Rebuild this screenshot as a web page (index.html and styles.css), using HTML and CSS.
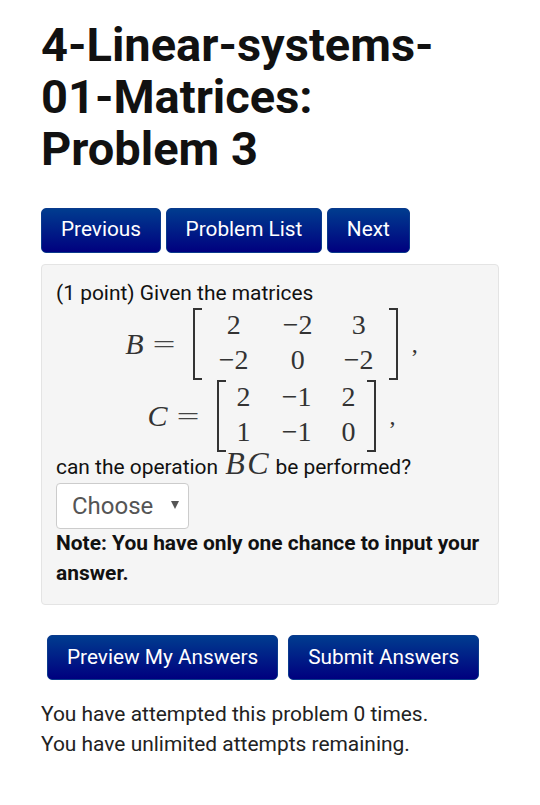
FILE: index.html
```html
<!DOCTYPE html>
<html lang="en">
<head>
    <meta charset="UTF-8">
    <meta name="viewport" content="width=device-width, initial-scale=1.0">
    <title>4-Linear-systems-01-Matrices: Problem 3</title>
    <link rel="stylesheet" href="styles.css">
</head>
<body>
    <h1>4-Linear-systems-<br>01-Matrices:<br>Problem 3</h1>
    <div class="nav-buttons">
        <a href="#" class="btn">Previous</a>
        <a href="#" class="btn">Problem List</a>
        <a href="#" class="btn">Next</a>
    </div>
    <div class="well">
        <div class="line">(1 point) Given the matrices</div>
        <div class="math-row">
            <span class="math-label"><i>B</i><span class="equals">=</span></span>
            <div class="matrix matrix-b">
                <span>2</span><span>−2</span><span>3</span>
                <span>−2</span><span>0</span><span>−2</span>
            </div>
            <span class="comma">,</span>
        </div>
        <div class="math-row">
            <span class="math-label"><i>C</i><span class="equals">=</span></span>
            <div class="matrix matrix-c">
                <span>2</span><span>−1</span><span>2</span>
                <span>1</span><span>−1</span><span>0</span>
            </div>
            <span class="comma">,</span>
        </div>
        <div class="line">can the operation <i class="math-inline">BC</i> be performed?</div>
        <div class="select-wrap">
            <select class="answer">
                <option>Choose</option>
            </select>
        </div>
        <p class="note">Note: You have only one chance to input your answer.</p>
    </div>
    <div class="submit-buttons">
        <button class="btn">Preview My Answers</button>
        <button class="btn">Submit Answers</button>
    </div>
    <p class="attempts">You have attempted this problem 0 times.<br>You have unlimited attempts remaining.</p>
</body>
</html>
```
FILE: styles.css
```css
* {
    box-sizing: border-box;
}

body {
    margin: 0;
    padding: 19px 41px 0;
    font-family: Roboto, 'Liberation Sans', sans-serif;
    font-size: 20.95px;
    line-height: 30px;
    color: #111;
    background-color: #fff;
}

h1 {
    margin: 0 0 33px;
    font-size: 47px;
    line-height: 52px;
    font-weight: 700;
    color: #111;
}

.btn {
    display: inline-block;
    height: 45px;
    padding: 0 19px;
    font-family: inherit;
    font-size: 20.8px;
    line-height: 41px;
    color: #fff;
    text-decoration: none;
    background-image: linear-gradient(to bottom, #003c8f, #00007f);
    border: 1px solid #0a3a8c;
    border-radius: 5px;
}

.nav-buttons {
    display: flex;
    gap: 4.5px;
    margin-bottom: 11px;
}

.well {
    height: 341px;
    padding: 13px 14px 0;
    background-color: #f5f5f5;
    border: 1px solid #e4e4e4;
    border-radius: 4px;
}

.math-row {
    display: flex;
    justify-content: center;
    align-items: center;
    height: 72px;
    padding-left: 3px;
    font-family: 'Liberation Serif', serif;
    font-size: 28px;
    color: #333;
}

.math-label {
    display: flex;
    align-items: center;
    gap: 8px;
    margin-right: 16px;
    font-size: 30px;
    white-space: nowrap;
}

.equals {
    font-family: 'DejaVu Sans', sans-serif;
    font-weight: 200;
    color: #444;
}

.matrix {
    display: grid;
    align-items: center;
    justify-items: center;
    justify-content: start;
    position: relative;
    height: 72px;
    line-height: 34px;
    padding: 0 2px 3px 1px;
    border-left: 2px solid #333;
    border-right: 2px solid #333;
}

/* the short top and bottom ticks of the brackets */
.matrix::before,
.matrix::after {
    content: "";
    position: absolute;
    top: 0;
    bottom: 0;
    width: 7px;
    border-top: 2px solid #333;
    border-bottom: 2px solid #333;
}

.matrix::before {
    left: 0;
}

.matrix::after {
    right: 0;
}

.matrix-b {
    grid-template-columns: 76px 52px 70px;
    width: 205px;
}

.matrix-c {
    grid-template-columns: 48px 58px 46px;
    width: 159px;
}

.comma {
    margin-left: 14px;
    font-size: 24px;
}

.math-inline {
    margin: 0 -1px 0 2px;
    font-family: 'Liberation Serif', serif;
    font-size: 32px;
    letter-spacing: 2.5px;
    line-height: 20px;
    color: #333;
}

.select-wrap {
    position: relative;
    width: 133px;
    margin-top: 1px;
}

/* small native-looking arrow, drawn over the select */
.select-wrap::after {
    content: "";
    position: absolute;
    top: 18px;
    right: 10px;
    border-top: 8px solid #555;
    border-left: 4px solid transparent;
    border-right: 4px solid transparent;
}

.answer {
    display: block;
    width: 100%;
    height: 46px;
    padding: 0 15px;
    font-family: inherit;
    font-size: 24px;
    color: #555;
    background-color: #fff;
    border: 1px solid #ccc;
    border-radius: 4px;
    appearance: none;
}

.note {
    margin: -1px 0 0;
    font-weight: 700;
}

.submit-buttons {
    display: flex;
    gap: 10px;
    margin: 30px 0 0 6px;
}

.attempts {
    margin: 19px 0 0;
    color: #222;
}
```
